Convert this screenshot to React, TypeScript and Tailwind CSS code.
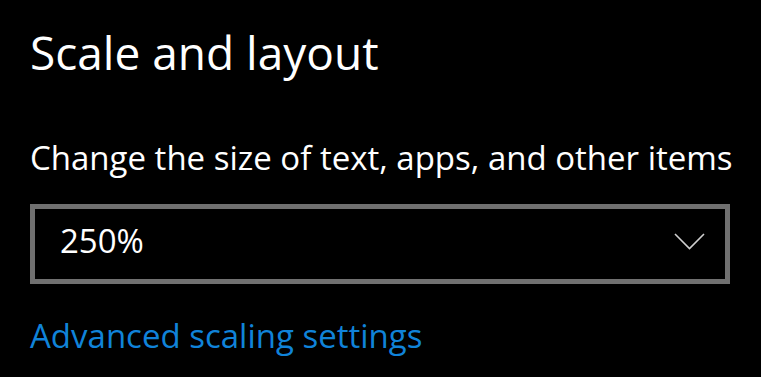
import * as React from "react";

function Chevron() {
  return (
    <svg width="31" height="17" viewBox="0 0 31 17" fill="none" className="shrink-0">
      <path d="M1 1 L15.5 15.5 L30 1" stroke="#cfcfcf" strokeWidth="1.6" />
    </svg>
  );
}

export default function App() {
  return (
    <div
      className="w-[761px] h-[377px] bg-black text-white overflow-hidden"
      style={{ fontFamily: '"Open Sans", "Noto Sans", sans-serif' }}
    >
      <div className="pl-[30px] pt-[24px]">
        <h1 className="text-[46px] leading-[56px] font-normal">Scale and layout</h1>
        <p className="mt-[58px] text-[33px] leading-[40px]">
          Change the size of text, apps, and other items
        </p>
        <div className="mt-[26px] w-[700px] h-[80px] border-[5px] border-[#707070] flex items-center justify-between pl-[25px] pr-[20px] pb-[6px]">
          <span className="text-[33px] leading-[40px]">250%</span>
          <Chevron />
        </div>
        <a className="block mt-[32px] text-[33px] leading-[40px] text-[#1083d9]">
          Advanced scaling settings
        </a>
      </div>
    </div>
  );
}
